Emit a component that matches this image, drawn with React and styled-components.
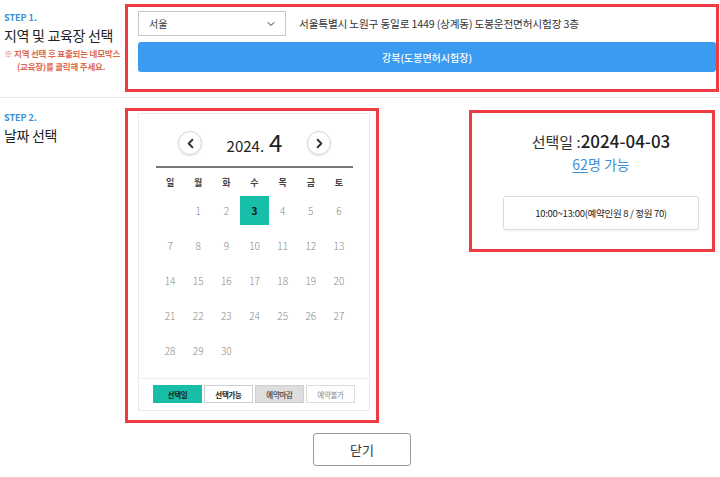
import React from 'react'
import styled, { createGlobalStyle } from 'styled-components'
import { ChevronLeft, ChevronRight, ChevronDown } from 'lucide-react'

const GlobalStyle = createGlobalStyle`
html, body {
    margin: 0;
    padding: 0;
    background: #fff;
    overflow: hidden;
}
body {
    font-family: "Noto Sans CJK KR", "Noto Sans", sans-serif;
    color: #333;
}
* {
    box-sizing: border-box;
}
`

const Page = styled.div`
width: 720px;
height: 477px;
display: flex;
flex-direction: column;
`

const StepRow = styled.section`
display: flex;
align-items: flex-start;
padding: ${props => props.$pad};
border-bottom: ${props => (props.$line ? '1px solid #ececec' : 'none')};
`

const StepLabel = styled.div`
width: 125px;
flex-shrink: 0;
padding: ${props => props.$top || '8px'} 0 0 4px;
`

const StepNo = styled.div`
font-size: 9px;
font-weight: 700;
color: #3b8fd8;
line-height: 12px;
`

const StepTitle = styled.div`
font-size: 14px;
color: #222;
line-height: 20px;
margin-top: 1px;
letter-spacing: -0.3px;
`

const Note = styled.div`
font-size: 8.5px;
font-weight: 700;
color: #dc6a4f;
line-height: 13px;
margin-top: 2px;
letter-spacing: -0.2px;
span {
    display: block;
    padding-left: 13px;
}
`

const RedBox = styled.div`
border: 3px solid #ef3b40;
background: #fff;
`

const RegionBox = styled(RedBox)`
width: 594px;
height: 88px;
padding: 4px 0 0 10px;
`

const RegionTop = styled.div`
display: flex;
align-items: center;
gap: 13px;
`

const Select = styled.div`
width: 148px;
height: 25px;
border: 1px solid #c9c9c9;
display: flex;
align-items: center;
justify-content: space-between;
padding: 0 8px 0 10px;
font-size: 10px;
color: #333;
`

const Address = styled.div`
font-size: 10.7px;
color: #333;
letter-spacing: -0.2px;
`

const CenterButton = styled.button`
display: block;
width: 578px;
height: 30px;
margin-top: 6px;
border: none;
border-radius: 3px;
background: #3a9bf0;
color: #fff;
font-family: inherit;
font-size: 10px;
font-weight: 500;
`

const CalendarBox = styled(RedBox)`
width: 254px;
height: 315px;
padding: 2px 6px 0 10px;
`

const Card = styled.div`
border: 1px solid #ebebeb;
height: 298px;
display: flex;
flex-direction: column;
`

const CalBody = styled.div`
padding: 16px 16px 0 17px;
`

const MonthHeader = styled.div`
display: flex;
align-items: center;
justify-content: space-between;
padding: 0 22px;
height: 26px;
border-bottom: 2px solid #777;
box-sizing: content-box;
padding-bottom: 10px;
`

const NavButton = styled.div`
width: 24px;
height: 24px;
border-radius: 50%;
border: 1px solid #d4d4d4;
box-shadow: 0 1px 2px rgba(0, 0, 0, 0.12);
display: flex;
align-items: center;
justify-content: center;
color: #333;
`

const MonthTitle = styled.div`
display: flex;
align-items: baseline;
gap: 5px;
color: #222;
font-size: 15px;
b {
    font-size: 24px;
    font-weight: 400;
    line-height: 24px;
}
`

const Grid = styled.div`
display: grid;
grid-template-columns: repeat(7, 1fr);
row-gap: ${props => props.$gap || '0px'};
`

const WeekDay = styled.div`
height: 28px;
display: flex;
align-items: center;
justify-content: center;
font-size: 9px;
font-weight: 700;
color: #444;
`

const Day = styled.div`
height: 29px;
display: flex;
align-items: center;
justify-content: center;
font-size: 10px;
font-weight: ${props => (props.$selected ? 700 : 300)};
color: ${props => (props.$selected ? '#111' : '#888')};
background: ${props => (props.$selected ? '#17bfa9' : 'transparent')};
`

const Legend = styled.div`
margin-top: auto;
border-top: 1px solid #eeeeee;
display: flex;
justify-content: center;
gap: 2px;
padding: 6px 0 7px;
`

const LegendItem = styled.div`
width: 49px;
height: 18px;
display: flex;
align-items: center;
justify-content: center;
font-size: 7.5px;
letter-spacing: -0.3px;
font-weight: ${props => props.$weight || 700};
background: ${props => props.$bg};
color: ${props => props.$color};
border: 1px solid ${props => props.$border};
`

const InfoBox = styled(RedBox)`
width: 246px;
height: 142px;
margin: 2px 5px 0 auto;
display: flex;
flex-direction: column;
align-items: center;
padding-top: 16px;
`

const PickedDate = styled.div`
font-size: 15px;
color: #333;
line-height: 24px;
padding-left: 18px;
strong {
    font-size: 17px;
    font-weight: 500;
    color: #222;
}
`

const Seats = styled.div`
font-size: 14px;
color: #3d8fd6;
line-height: 20px;
padding-left: 18px;
u {
    text-underline-offset: 2px;
}
`

const Slot = styled.div`
width: 196px;
height: 34px;
margin-top: 22px;
margin-left: 18px;
border: 1px solid #dcdcdc;
border-radius: 3px;
box-shadow: 0 1px 2px rgba(0, 0, 0, 0.06);
display: flex;
align-items: center;
justify-content: center;
font-size: 9.5px;
color: #222;
letter-spacing: -0.3px;
`

const Footer = styled.div`
display: flex;
justify-content: center;
padding: 10px 0 0 4px;
`

const CloseButton = styled.button`
width: 98px;
height: 33px;
border: 1px solid #9a9a9a;
border-radius: 3px;
background: #fff;
font-family: inherit;
font-size: 13px;
color: #333;
`

const weekDays = ['일', '월', '화', '수', '목', '금', '토']
const days = [null, ...Array.from({ length: 30 }, (_, i) => i + 1)]

const legends = [
    { label: '선택일', bg: '#17bfa9', color: '#1a1a1a', border: '#17bfa9' },
    { label: '선택가능', bg: '#fff', color: '#222', border: '#cfcfcf' },
    { label: '예약마감', bg: '#dedede', color: '#444', border: '#cfcfcf', weight: 500 },
    { label: '예약불가', bg: '#fff', color: '#888', border: '#dcdcdc', weight: 400 },
]

const App = () => {
    return (
        <Page>
            <GlobalStyle />
            <StepRow $pad="4px 0 5px" $line>
                <StepLabel>
                    <StepNo>STEP 1.</StepNo>
                    <StepTitle>지역 및 교육장 선택</StepTitle>
                    <Note>
                        ※ 지역 선택 후 표출되는 네모박스
                        <span>(교육장)를 클릭해 주세요.</span>
                    </Note>
                </StepLabel>
                <RegionBox>
                    <RegionTop>
                        <Select>
                            서울
                            <ChevronDown size={12} strokeWidth={2} />
                        </Select>
                        <Address>서울특별시 노원구 동일로 1449 (상계동) 도봉운전면허시험장 3층</Address>
                    </RegionTop>
                    <CenterButton>강북(도봉면허시험장)</CenterButton>
                </RegionBox>
            </StepRow>
            <StepRow $pad="10px 0 0">
                <StepLabel $top="4px">
                    <StepNo>STEP 2.</StepNo>
                    <StepTitle>날짜 선택</StepTitle>
                </StepLabel>
                <CalendarBox>
                    <Card>
                        <CalBody>
                            <MonthHeader>
                                <NavButton><ChevronLeft size={15} strokeWidth={3} /></NavButton>
                                <MonthTitle>2024. <b>4</b></MonthTitle>
                                <NavButton><ChevronRight size={15} strokeWidth={3} /></NavButton>
                            </MonthHeader>
                            <Grid>
                                {weekDays.map(d => <WeekDay key={d}>{d}</WeekDay>)}
                            </Grid>
                            <Grid $gap="6px">
                                {days.map((d, i) => (
                                    <Day key={i} $selected={d === 3}>{d}</Day>
                                ))}
                            </Grid>
                        </CalBody>
                        <Legend>
                            {legends.map(l => (
                                <LegendItem
                                    key={l.label}
                                    $bg={l.bg}
                                    $color={l.color}
                                    $border={l.border}
                                    $weight={l.weight}
                                >
                                    {l.label}
                                </LegendItem>
                            ))}
                        </Legend>
                    </Card>
                </CalendarBox>
                <InfoBox>
                    <PickedDate>선택일 :<strong>2024-04-03</strong></PickedDate>
                    <Seats><u>62</u>명 가능</Seats>
                    <Slot>10:00~13:00(예약인원 8 / 정원 70)</Slot>
                </InfoBox>
            </StepRow>
            <Footer>
                <CloseButton>닫기</CloseButton>
            </Footer>
        </Page>
    )
}

export default App
